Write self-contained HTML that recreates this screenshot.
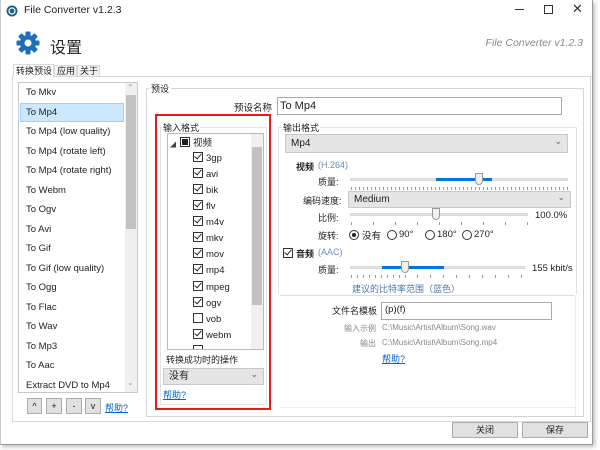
<!DOCTYPE html>
<html><head><meta charset="utf-8"><style>
*{margin:0;padding:0;box-sizing:border-box}
body{width:600px;height:450px;background:#fff;position:relative;overflow:hidden;font-family:"Liberation Sans","Noto Sans CJK SC",sans-serif;font-size:9.5px;color:#222}
.a{position:absolute;white-space:nowrap}
.box{position:absolute;border:1px solid #d5d5d5}
.btn{position:absolute;background:#e1e1e1;border:1px solid #adadad;text-align:center;font-size:9px;line-height:14px}
.dd{position:absolute;background:#e5e5e5;border:1px solid #c9c9c9;padding-left:5px;font-size:10px}
.dd:after{content:"⌄";position:absolute;right:5px;top:-2px;font-size:9px;color:#666}
.cb{position:absolute;width:10px;height:10px;border:1px solid #333;background:#fff}
.cb.c:after{content:"";position:absolute;left:2px;top:-1px;width:3px;height:6px;border:solid #222;border-width:0 1.5px 1.5px 0;transform:rotate(40deg)}
.li{position:absolute;left:26px;font-size:9.5px}
.lnk{color:#0066cc;text-decoration:underline}
.gray{color:#888}
.track{position:absolute;height:3px;background:#e7e7e7;border:1px solid #d8d8d8}
.blue{position:absolute;height:3px;background:#0078d7}
.thumb{position:absolute;width:8px;height:12px;background:#f0f0f0;border:1px solid #999;border-radius:0 0 4px 4px}
.ticks{position:absolute;height:3px;background:repeating-linear-gradient(90deg,#9a9a9a 0 1px,transparent 1px 4px)}
.rad{position:absolute;width:10px;height:10px;border:1px solid #333;border-radius:50%;background:#fff}
.t{position:absolute;left:206px;white-space:nowrap}
</style></head><body>
<div class="a" style="left:0;top:0;width:593px;height:445px;border:1px solid #9a9a9a;border-top:none;border-left:1px solid #ccc;box-shadow:2px 2px 4px rgba(0,0,0,.25)"></div>
<svg class="a" style="left:6px;top:5px" width="12" height="12" viewBox="0 0 12 12"><circle cx="6" cy="6" r="5.5" fill="#1e5f8e"/><circle cx="6" cy="6" r="3" fill="none" stroke="#fff" stroke-width="1.2"/></svg>
<div class="a" style="left:24px;top:4px;font-size:10.5px">File Converter v1.2.3</div>
<div class="a" style="left:515px;top:9px;width:9px;height:1px;background:#333"></div>
<div class="a" style="left:544px;top:5px;width:9px;height:9px;border:1px solid #333"></div>
<div class="a" style="left:572px;top:1px;font-size:13px;color:#333">✕</div>
<svg class="a" style="left:16px;top:31px" width="24" height="24" viewBox="0 0 24 24"><g fill="#1c6fb8"><circle cx="12" cy="12" r="8"/><g id="t"><rect x="9.5" y="0.5" width="5" height="5" rx="1"/><rect x="9.5" y="18.5" width="5" height="5" rx="1"/></g><use href="#t" transform="rotate(45 12 12)"/><use href="#t" transform="rotate(90 12 12)"/><use href="#t" transform="rotate(135 12 12)"/></g><circle cx="12" cy="12" r="3.5" fill="#fff"/></svg>
<div class="a" style="left:50px;top:34px;font-size:16px">设置</div>
<div class="a" style="right:17px;top:37px;font-size:10.5px;font-style:italic;color:#888">File Converter v1.2.3</div>
<div class="a" style="left:12px;top:76px;width:579px;height:346px;border:1px solid #d9d9d9"></div>
<div class="a" style="left:13px;top:64px;width:41px;height:13px;border:1px solid #d9d9d9;border-bottom:none;background:#fff;font-size:9px;padding-left:2px;line-height:12px">转换预设</div>
<div class="a" style="left:54px;top:65px;width:23px;height:12px;border:1px solid #d9d9d9;background:#f0f0f0;font-size:9px;padding-left:2px;line-height:11px">应用</div>
<div class="a" style="left:77px;top:65px;width:23px;height:12px;border:1px solid #d9d9d9;background:#f0f0f0;font-size:9px;padding-left:2px;line-height:11px">关于</div>
<div class="box" style="left:18px;top:82px;width:120px;height:311px;border-color:#c9c9c9"></div>
<div class="a" style="left:125px;top:83px;width:12px;height:309px;background:#f0f0f0"></div>
<div class="a" style="left:126px;top:95px;width:10px;height:134px;background:#c2c2c2"></div>
<div class="a" style="left:127px;top:83px;font-size:8px;color:#999">⌃</div>
<div class="a" style="left:127px;top:378px;font-size:8px;color:#999">⌄</div>
<div class="a" style="left:20px;top:103px;width:104px;height:19px;background:#cce8ff;border:1px solid #99d1ff"></div>
<div class="li" style="top:87px">To Mkv</div>
<div class="li" style="top:107px">To Mp4</div>
<div class="li" style="top:126px">To Mp4 (low quality)</div>
<div class="li" style="top:146px">To Mp4 (rotate left)</div>
<div class="li" style="top:165px">To Mp4 (rotate right)</div>
<div class="li" style="top:185px">To Webm</div>
<div class="li" style="top:204px">To Ogv</div>
<div class="li" style="top:224px">To Avi</div>
<div class="li" style="top:243px">To Gif</div>
<div class="li" style="top:263px">To Gif (low quality)</div>
<div class="li" style="top:282px">To Ogg</div>
<div class="li" style="top:302px">To Flac</div>
<div class="li" style="top:321px">To Wav</div>
<div class="li" style="top:341px">To Mp3</div>
<div class="li" style="top:360px">To Aac</div>
<div class="li" style="top:380px">Extract DVD to Mp4</div>
<div class="btn" style="left:27px;top:398px;width:15px;height:16px">^</div>
<div class="btn" style="left:46px;top:398px;width:16px;height:16px">+</div>
<div class="btn" style="left:66px;top:398px;width:16px;height:16px">-</div>
<div class="btn" style="left:85px;top:398px;width:16px;height:16px">v</div>
<div class="a lnk" style="left:105px;top:401px;font-size:9px">帮助?</div>
<div class="box" style="left:146px;top:88px;width:438px;height:329px"></div>
<div class="a" style="left:149px;top:82px;background:#fff;padding:0 2px;font-size:9px">预设</div>
<div class="a" style="left:234px;top:100px;font-size:9.5px">预设名称</div>
<div class="box" style="left:277px;top:97px;width:285px;height:18px;border-color:#aaa;font-size:11px;padding-left:2px;line-height:16px">To Mp4</div>
<div class="a" style="left:155px;top:114px;width:116px;height:296px;border:2px solid #e51c1c"></div>
<div class="box" style="left:160px;top:127px;width:107px;height:278px;border-color:#e3e3e3"></div>
<div class="a" style="left:162px;top:121px;background:#fff;padding:0 1px;font-size:9px">输入格式</div>
<div class="box" style="left:167px;top:133px;width:97px;height:217px;border-color:#bbb"></div>
<div class="a" style="left:251px;top:134px;width:12px;height:215px;background:#f0f0f0"></div>
<div class="a" style="left:252px;top:147px;width:10px;height:158px;background:#c2c2c2"></div>
<div class="a" style="left:170px;top:140px;font-size:6px;color:#444">◢</div>
<div class="cb" style="left:180px;top:137px"></div><div class="a" style="left:182px;top:139px;width:6px;height:6px;background:#222"></div>
<div class="a" style="left:193px;top:135px;font-size:9.5px">视频</div>
<div class="cb c" style="left:193px;top:152px"></div><div class="t" style="top:153px">3gp</div>
<div class="cb c" style="left:193px;top:168px"></div><div class="t" style="top:169px">avi</div>
<div class="cb c" style="left:193px;top:184px"></div><div class="t" style="top:185px">bik</div>
<div class="cb c" style="left:193px;top:200px"></div><div class="t" style="top:201px">flv</div>
<div class="cb c" style="left:193px;top:216px"></div><div class="t" style="top:217px">m4v</div>
<div class="cb c" style="left:193px;top:232px"></div><div class="t" style="top:233px">mkv</div>
<div class="cb c" style="left:193px;top:248px"></div><div class="t" style="top:249px">mov</div>
<div class="cb c" style="left:193px;top:264px"></div><div class="t" style="top:265px">mp4</div>
<div class="cb c" style="left:193px;top:281px"></div><div class="t" style="top:282px">mpeg</div>
<div class="cb c" style="left:193px;top:297px"></div><div class="t" style="top:298px">ogv</div>
<div class="cb" style="left:193px;top:313px"></div><div class="t" style="top:314px">vob</div>
<div class="cb c" style="left:193px;top:329px"></div><div class="t" style="top:330px">webm</div>
<div class="a" style="left:193px;top:345px;width:10px;height:4px;border:1px solid #333;border-bottom:none;overflow:hidden"></div>
<div class="a" style="left:166px;top:353px;font-size:9px">转换成功时的操作</div>
<div class="dd" style="left:163px;top:368px;width:101px;height:17px;line-height:15px">没有</div>
<div class="a lnk" style="left:163px;top:388px;font-size:9px">帮助?</div>
<div class="box" style="left:278px;top:127px;width:299px;height:167px;border-color:#e3e3e3;border-bottom:none"></div>
<div class="a" style="left:282px;top:121px;background:#fff;padding:0 1px;font-size:9px">输出格式</div>
<div class="dd" style="left:285px;top:134px;width:283px;height:19px;line-height:17px">Mp4</div>
<div class="a" style="left:296px;top:160px;font-size:9px;font-weight:bold">视频</div>
<div class="a" style="left:318px;top:160px;font-size:9px;color:#6a8fb5">(H.264)</div>
<div class="a" style="left:318px;top:175px;font-size:9px">质量:</div>
<div class="track" style="left:350px;top:178px;width:218px"></div>
<div class="blue" style="left:436px;top:178px;width:56px"></div>
<div class="thumb" style="left:475px;top:173px"></div>
<div class="ticks" style="left:351px;top:187px;width:217px"></div>
<div class="a" style="left:303px;top:194px;font-size:9px">编码速度:</div>
<div class="dd" style="left:348px;top:191px;width:223px;height:17px;line-height:15px">Medium</div>
<div class="a" style="left:318px;top:211px;font-size:9px">比例:</div>
<div class="track" style="left:350px;top:213px;width:178px"></div>
<div class="thumb" style="left:432px;top:208px"></div>
<div class="ticks" style="left:351px;top:222px;width:178px;background:repeating-linear-gradient(90deg,#9a9a9a 0 1px,transparent 1px 22px)"></div>
<div class="a" style="left:535px;top:210px;font-size:9.5px">100.0%</div>
<div class="a" style="left:318px;top:229px;font-size:9px">旋转:</div>
<div class="rad" style="left:349px;top:230px"></div><div class="a" style="left:352px;top:233px;width:4px;height:4px;border-radius:50%;background:#222"></div>
<div class="a" style="left:362px;top:228px;font-size:9.5px">没有</div>
<div class="rad" style="left:387px;top:230px"></div><div class="a" style="left:399px;top:229px;font-size:9.5px">90°</div>
<div class="rad" style="left:425px;top:230px"></div><div class="a" style="left:437px;top:229px;font-size:9.5px">180°</div>
<div class="rad" style="left:462px;top:230px"></div><div class="a" style="left:474px;top:229px;font-size:9.5px">270°</div>
<div class="cb c" style="left:283px;top:248px"></div>
<div class="a" style="left:296px;top:247px;font-size:9px;font-weight:bold">音频</div>
<div class="a" style="left:318px;top:247px;font-size:9px;color:#6a8fb5">(AAC)</div>
<div class="a" style="left:318px;top:263px;font-size:9px">质量:</div>
<div class="track" style="left:350px;top:266px;width:175px"></div>
<div class="blue" style="left:382px;top:266px;width:62px"></div>
<div class="thumb" style="left:401px;top:261px"></div>
<div class="ticks" style="left:351px;top:275px;width:60px;background:repeating-linear-gradient(90deg,#9a9a9a 0 1px,transparent 1px 6px)"></div>
<div class="ticks" style="left:417px;top:275px;width:110px;background:repeating-linear-gradient(90deg,#9a9a9a 0 1px,transparent 1px 13px)"></div>
<div class="a" style="left:532px;top:263px;font-size:9.5px">155 kbit/s</div>
<div class="a" style="left:352px;top:282px;font-size:9px;color:#4a7ab0">建议的比特率范围（蓝色）</div>
<div class="a" style="left:280px;top:295px;width:295px;height:1px;background:#ddd"></div>
<div class="a" style="left:332px;top:304px;font-size:9px">文件名模板</div>
<div class="box" style="left:381px;top:302px;width:171px;height:18px;border-color:#aaa;font-size:9.5px;padding-left:3px;line-height:13px">(p)(f)</div>
<div class="a gray" style="left:344px;top:323px;font-size:8px">输入示例</div>
<div class="a gray" style="left:382px;top:323px;font-size:8px">C:\Music\Artist\Album\Song.wav</div>
<div class="a gray" style="left:360px;top:338px;font-size:8px">输出</div>
<div class="a gray" style="left:382px;top:338px;font-size:8px">C:\Music\Artist\Album\Song.mp4</div>
<div class="a lnk" style="left:382px;top:352px;font-size:9px">帮助?</div>
<div class="a" style="left:575px;top:296px;width:1px;height:120px;background:#eee"></div>
<div class="a" style="left:280px;top:407px;width:295px;height:1px;background:#eee"></div>
<div class="btn" style="left:452px;top:422px;width:66px;height:16px">关闭</div>
<div class="btn" style="left:522px;top:422px;width:66px;height:16px">保存</div>
</body></html>
